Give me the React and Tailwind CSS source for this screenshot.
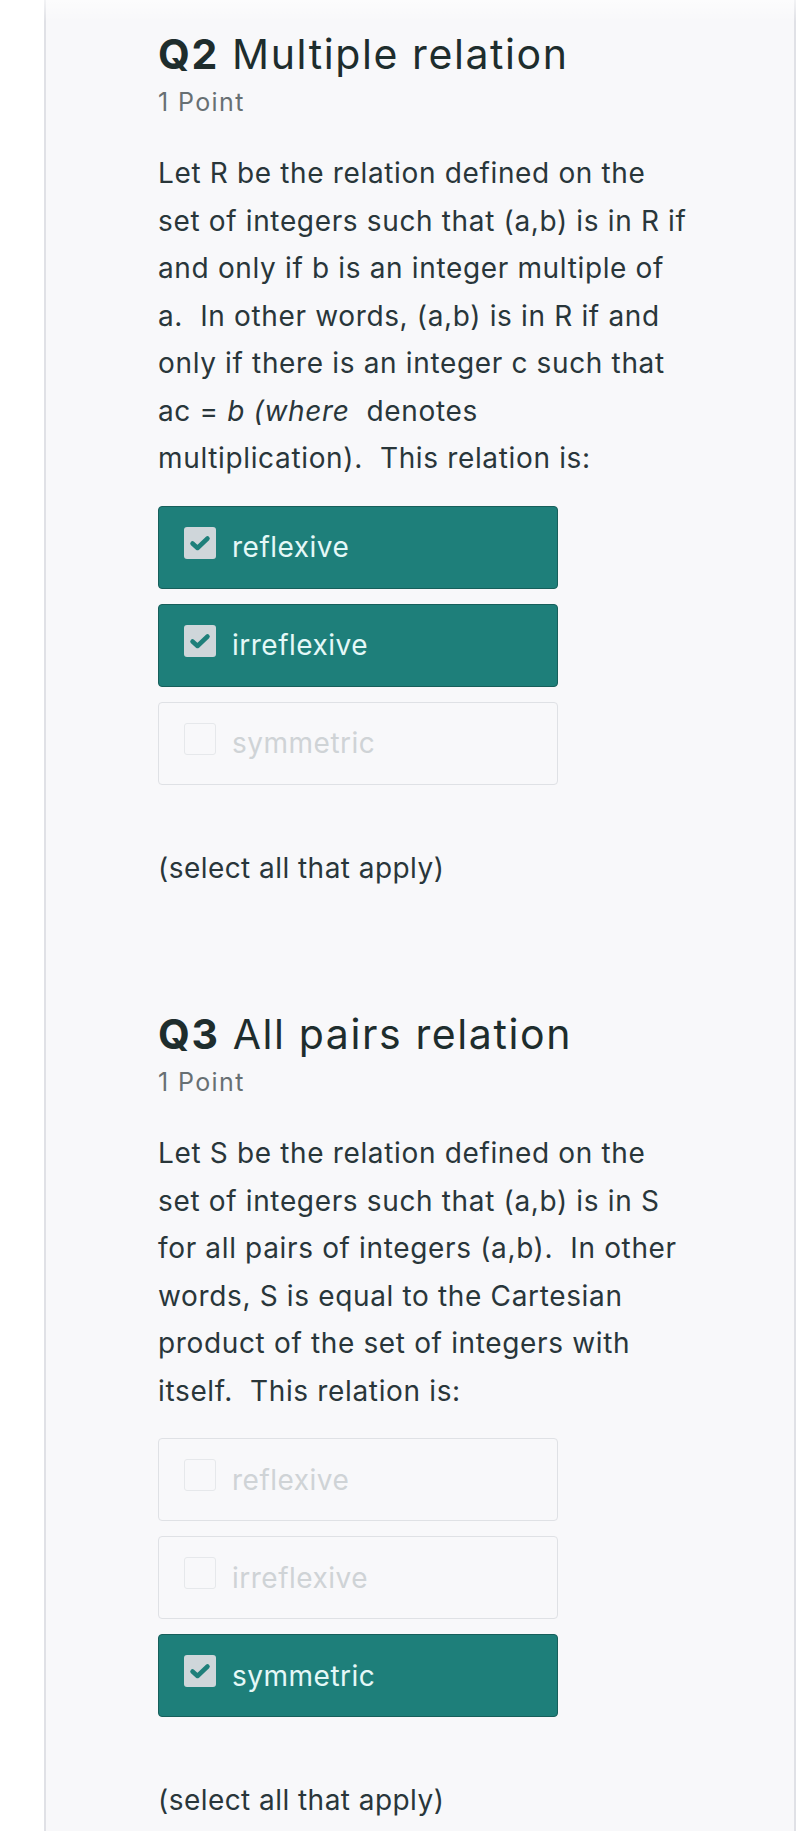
import React from 'react';

const FONT = { fontFamily: 'Inter, Lato, Arial, sans-serif' };

function CheckIcon() {
  return (
    <svg viewBox="0 0 32 32" className="h-8 w-8">
      <rect x="0" y="0" width="32" height="32" rx="3" fill="#cfd6da" />
      <path
        d="M8.5 16.5 L13.5 21 L23.5 11.5"
        fill="none"
        stroke="#1e7f7a"
        strokeWidth="4.5"
        strokeLinecap="round"
        strokeLinejoin="round"
      />
    </svg>
  );
}

function Option({ label, checked }) {
  if (checked) {
    return (
      <div className="flex h-[83px] w-[400px] items-center rounded-[4px] border border-[#175f5b] bg-[#1e7f7a] pl-[25px]">
        <div className="mb-[9px] shrink-0">
          <CheckIcon />
        </div>
        <span className="ml-[16px] text-[28px] leading-[34px] tracking-[0.5px] text-[#e4f8f7]">{label}</span>
      </div>
    );
  }
  return (
    <div className="flex h-[83px] w-[400px] items-center rounded-[4px] border border-[#dfe1e5] bg-[#f8f8fa] pl-[25px]">
      <div className="mb-[9px] h-8 w-8 shrink-0 rounded-[3px] border border-[#e6e8eb]" />
      <span className="ml-[16px] text-[28px] leading-[34px] tracking-[0.5px] text-[#cfd3d6]">{label}</span>
    </div>
  );
}

function Question({ num, title, lines, options, first }) {
  return (
    <section className={first ? 'pt-[30px]' : 'pt-[118px]'}>
      <h2 className="text-[41px] leading-[48px] tracking-[1.6px] text-[#1e2d2d]">
        <span className="font-bold">{num}</span> {title}
      </h2>
      <div className="mt-[9px] text-[25px] leading-[30px] tracking-[1.4px] text-[#687073]">1 Point</div>
      <div className="mt-[33px] text-[28px] leading-[47.5px] tracking-[0.65px] text-[#29363a]">
        {lines.map((line, i) => (
          <div key={i} className="whitespace-pre">
            {line}
          </div>
        ))}
      </div>
      <div className="mt-[23px] flex flex-col gap-[15px]">
        {options.map((o) => (
          <Option key={o.label} label={o.label} checked={o.checked} />
        ))}
      </div>
      <div className="mt-[60px] text-[28px] leading-[47.5px] tracking-[0.45px] text-[#29363a]">
        (select all that apply)
      </div>
    </section>
  );
}

export default function App() {
  const q2Lines = [
    'Let R be the relation defined on the',
    'set of integers such that (a,b) is in R if',
    'and only if b is an integer multiple of',
    'a.  In other words, (a,b) is in R if and',
    'only if there is an integer c such that',
    <>
      ac = <i>b (where</i>{'  '}denotes
    </>,
    'multiplication).  This relation is:',
  ];
  const q3Lines = [
    'Let S be the relation defined on the',
    'set of integers such that (a,b) is in S',
    'for all pairs of integers (a,b).  In other',
    'words, S is equal to the Cartesian',
    'product of the set of integers with',
    'itself.  This relation is:',
  ];

  return (
    <div className="relative min-h-screen bg-white" style={FONT}>
      <div className="ml-[44px] min-h-screen w-[752px] border-x-2 border-[#e0e1e6] bg-[#f8f8fa] pb-10 pl-[112px]">
        <Question
          first
          num="Q2"
          title="Multiple relation"
          lines={q2Lines}
          options={[
            { label: 'reflexive', checked: true },
            { label: 'irreflexive', checked: true },
            { label: 'symmetric', checked: false },
          ]}
        />
        <Question
          num="Q3"
          title="All pairs relation"
          lines={q3Lines}
          options={[
            { label: 'reflexive', checked: false },
            { label: 'irreflexive', checked: false },
            { label: 'symmetric', checked: true },
          ]}
        />
      </div>
      <div className="pointer-events-none absolute inset-x-0 top-0 h-[22px] bg-linear-to-b from-white/60 to-transparent" />
    </div>
  );
}
